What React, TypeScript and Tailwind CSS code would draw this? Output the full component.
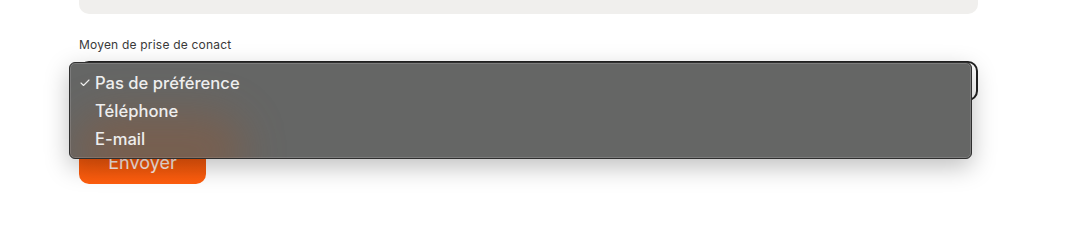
import { Check } from 'lucide-react';

const OPTIONS = ['Pas de préférence', 'Téléphone', 'E-mail'];

export default function App() {
  return (
    <div className="relative h-[240px] w-full bg-white font-['Inter',sans-serif]">
      <div className="ml-[79px] w-[899px]">
        <div className="h-[14px] rounded-b-[10px] bg-[#f0efed]" />

        <label className="mt-[23px] block text-[12px] leading-[16px] tracking-[0.2px] text-[#3a3a3a]">
          Moyen de prise de conact
        </label>

        <div className="mt-[8px] h-[40px] rounded-[10px] border-2 border-[#222]" />

        <button className="mt-[39px] flex h-[44px] w-[127px] items-center justify-center rounded-[10px] bg-gradient-to-b from-[#e85208] to-[#ff5e0e] text-[18px] text-white/90">
          Envoyer
        </button>
      </div>

      {/* native select popup */}
      <div className="absolute left-[69px] top-[62px] h-[97px] w-[903px] overflow-hidden rounded-[6px] border border-[#2f2f2f] bg-[#656665] shadow-[0_8px_24px_rgba(0,0,0,0.25)]">
        <div className="absolute inset-0 rounded-[5px] border border-white/15" />
        <div className="absolute bottom-[-30px] left-[5px] h-[75px] w-[170px] rounded-full bg-[#9a5228]/35 blur-[20px]" />
        <ul className="relative pt-[6px] text-[16.6px] leading-[28px] text-[#eeeeee]">
          {OPTIONS.map((opt, i) => (
            <li key={opt} className="flex items-center">
              <span className="flex w-[25px] justify-end pr-[4px]">
                {i === 0 && <Check className="h-[12px] w-[12px]" strokeWidth={2.2} />}
              </span>
              <span className="font-medium">{opt}</span>
            </li>
          ))}
        </ul>
      </div>
    </div>
  );
}
